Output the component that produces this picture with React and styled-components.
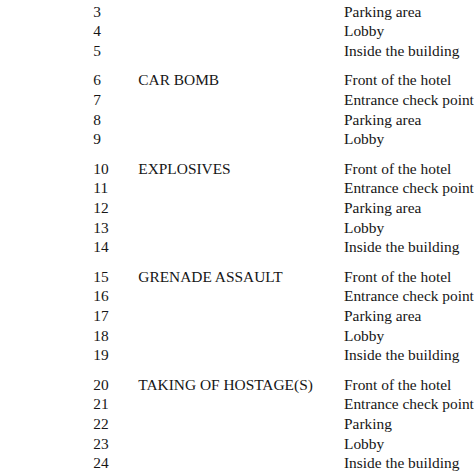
import React from 'react';
import styled, { createGlobalStyle } from 'styled-components';

const GlobalStyle = createGlobalStyle`
  html, body {
    margin: 0;
    padding: 0;
    background: #fff;
    overflow: hidden;
  }
`;

const Table = styled.div`
  width: 474px;
  height: 474px;
  overflow: hidden;
  padding: 1.6px 0 0 93.3px;
  box-sizing: border-box;
  font-family: "Liberation Serif", "Times New Roman", serif;
  font-size: 15.4px;
  color: #161616;
`;

const Group = styled.div`
  display: flex;
  flex-direction: column;
  & + & {
    margin-top: 9.8px;
  }
`;

const Row = styled.div`
  display: grid;
  grid-template-columns: 45px 205.7px 1fr;
  height: 19.65px;
  line-height: 19.65px;
  white-space: nowrap;
`;

const Cell = styled.span`
  overflow: visible;
`;

const groups = [
  {
    label: '',
    rows: [
      [3, 'Parking area'],
      [4, 'Lobby'],
      [5, 'Inside the building'],
    ],
  },
  {
    label: 'CAR BOMB',
    rows: [
      [6, 'Front of the hotel'],
      [7, 'Entrance check point'],
      [8, 'Parking area'],
      [9, 'Lobby'],
    ],
  },
  {
    label: 'EXPLOSIVES',
    rows: [
      [10, 'Front of the hotel'],
      [11, 'Entrance check point'],
      [12, 'Parking area'],
      [13, 'Lobby'],
      [14, 'Inside the building'],
    ],
  },
  {
    label: 'GRENADE ASSAULT',
    rows: [
      [15, 'Front of the hotel'],
      [16, 'Entrance check point'],
      [17, 'Parking area'],
      [18, 'Lobby'],
      [19, 'Inside the building'],
    ],
  },
  {
    label: 'TAKING OF HOSTAGE(S)',
    rows: [
      [20, 'Front of the hotel'],
      [21, 'Entrance check point'],
      [22, 'Parking'],
      [23, 'Lobby'],
      [24, 'Inside the building'],
    ],
  },
];

export default function App() {
  return (
    <>
      <GlobalStyle />
      <Table>
        {groups.map((g, gi) => (
          <Group key={gi}>
            {g.rows.map(([n, place], i) => (
              <Row key={n}>
                <Cell>{n}</Cell>
                <Cell>{i === 0 ? g.label : ''}</Cell>
                <Cell>{place}</Cell>
              </Row>
            ))}
          </Group>
        ))}
      </Table>
    </>
  );
}
